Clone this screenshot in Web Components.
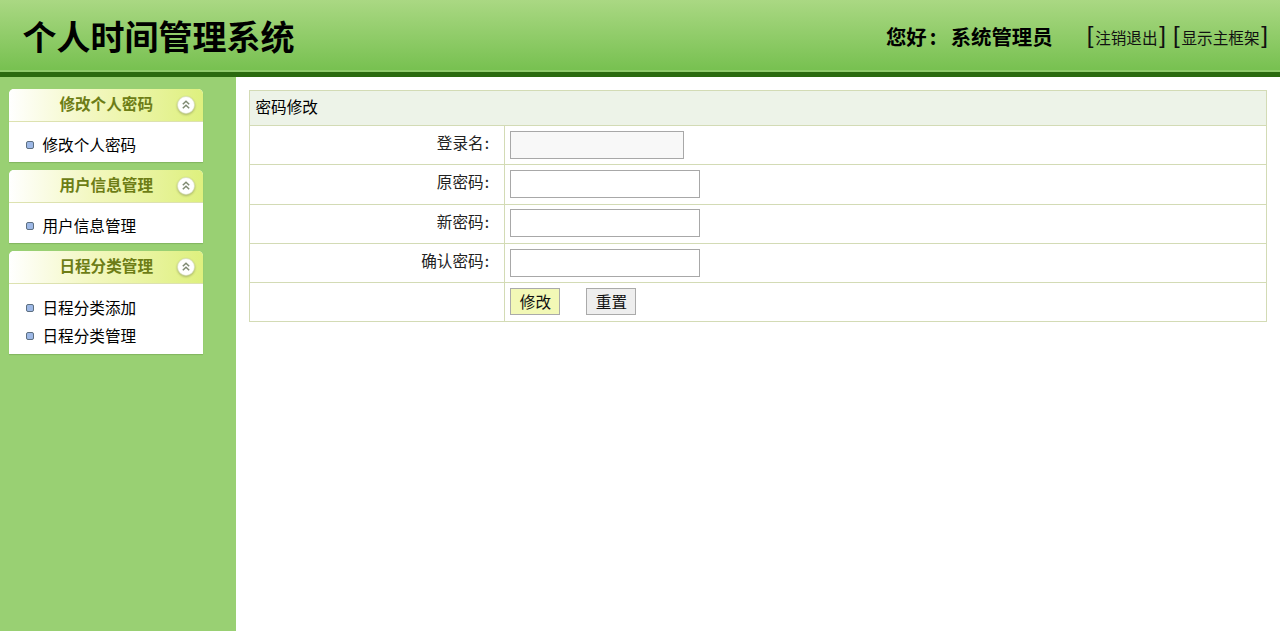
<!DOCTYPE html>
<html lang="zh"><head><meta charset="utf-8"><title>个人时间管理系统</title>
<style>
html,body{margin:0;height:100%;overflow:hidden;background:#fff}
body{font-family:"Noto Sans CJK SC","Liberation Sans",sans-serif;color:#000}
</style></head><body>
<app-shell>
  <app-header slot="header" title-text="个人时间管理系统" greeting="您好" name="系统管理员">
    <bracket-link>注销退出</bracket-link><bracket-link>显示主框架</bracket-link>
  </app-header>
  <side-panel slot="side" heading="修改个人密码"><side-item>修改个人密码</side-item></side-panel>
  <side-panel slot="side" heading="用户信息管理"><side-item>用户信息管理</side-item></side-panel>
  <side-panel slot="side" heading="日程分类管理" style="--pt:8.5px;--pb:5.5px"><side-item>日程分类添加</side-item><side-item>日程分类管理</side-item></side-panel>
  <form-table heading="密码修改">
    <form-row label="登录名"><text-field width="174" readonly></text-field></form-row>
    <form-row label="原密码"><text-field width="190"></text-field></form-row>
    <form-row label="新密码"><text-field width="190"></text-field></form-row>
    <form-row label="确认密码"><text-field width="190"></text-field></form-row>
    <form-row><action-button primary>修改</action-button><action-button>重置</action-button></form-row>
  </form-table>
</app-shell>
<script>
function def(name, html, extra){
  const t=document.createElement('template');t.innerHTML=html;
  customElements.define(name,class extends HTMLElement{
    connectedCallback(){
      if(this.shadowRoot)return;
      const r=this.attachShadow({mode:'open'});r.appendChild(t.content.cloneNode(true));
      if(extra)extra(this,r);
    }
  });
}
def('app-shell',`<style>
:host{display:grid;grid-template-columns:236px 1fr;grid-template-rows:77px 1fr;height:631px;width:1280px}
.h{grid-column:1/3}
aside{background:#99d073;padding:12px 33px 0 9px;display:flex;flex-direction:column;gap:8px}
main{padding:13px 13px 0 13px;background:#fff}
</style><div class="h"><slot name="header"></slot></div><aside><slot name="side"></slot></aside><main><slot></slot></main>`);
def('app-header',`<style>
:host{display:flex;align-items:center;height:77px;box-sizing:border-box;border-bottom:5px solid #2b6a10;
 background:linear-gradient(#aad883,#76c04f);padding:0 12px 0 23px;box-shadow:inset 0 -2px 0 #8fcb6b}
h1{margin:0;font-size:34px;font-weight:700;line-height:72px;flex:1;margin-left:-.5px}
b{font-size:20.4px;font-weight:700;margin-right:34px;display:flex}
em{font-style:normal;display:block;width:10px;margin:0 11px 0 3px;text-align:left}
</style><h1></h1><b><span class="g"></span><em>:</em><span class="n"></span></b><slot></slot>`,(e,r)=>{
  r.querySelector('h1').textContent=e.getAttribute('title-text');
  r.querySelector('.g').textContent=e.getAttribute('greeting');
  r.querySelector('.n').textContent=e.getAttribute('name');
});
def('bracket-link',`<style>
:host{display:inline-flex;align-items:center;font-size:15.6px;color:#111;height:30px;margin-left:7px;padding-top:1px}
:host(:first-of-type){margin-left:0}
i{font:normal 24px/30px "Liberation Sans",sans-serif;width:8.5px;margin-top:-3px}
i:last-child{text-align:right}
</style><i>[</i><slot></slot><i>]</i>`);
def('side-panel',`<style>
:host{display:block;width:194px;background:#fff;border-radius:5px 5px 0 0;box-shadow:0 1px 1px rgba(80,120,50,.3)}
header{position:relative;height:32px;border-bottom:1px solid #dde2b0;border-radius:5px 5px 0 0;
 background:linear-gradient(90deg,#fff,#f2f7bd 45%,#def07e);font-size:15.6px;font-weight:700;color:#6d7d16;line-height:29px;text-align:right}
span{padding-right:50px;white-space:nowrap}
svg{width:20px;height:20px;position:absolute;right:7px;top:6px;filter:drop-shadow(0 1px 1px rgba(90,100,60,.45))}
.b{padding:var(--pt,8px) 0 var(--pb,4px)}
</style><header><span></span><svg viewBox="0 0 20 20"><circle cx="10" cy="10" r="8.5" fill="#fff" stroke="#d6dcbc" stroke-width=".7"/><path d="M6.8 9.3 10 6.2l3.2 3.1M6.8 13.3 10 10.2l3.2 3.1" fill="none" stroke="#7f8a72" stroke-width="1.5"/></svg></header><div class="b"><slot></slot></div>`,(e,r)=>{
  r.querySelector('span').textContent=e.getAttribute('heading');
});
def('side-item',`<style>
:host{display:flex;align-items:center;height:28px;font-size:15.6px;padding-left:17px;gap:8.5px}
i{width:6px;height:6px;background:#9db8e6;border:1px solid #5d6f80;border-radius:2px;margin-top:2px}
</style><i></i><slot></slot>`);
def('form-table',`<style>
:host{display:block;width:1018px;border:1px solid #d3dbb5;border-bottom:0;font-size:15.6px;box-sizing:border-box}
header{height:34px;line-height:31px;background:#edf3e8;padding-left:5.5px;border-bottom:1px solid #d3dbb5}
</style><header></header><slot></slot>`,(e,r)=>{
  r.querySelector('header').textContent=e.getAttribute('heading');
});
def('form-row',`<style>
:host{display:grid;grid-template-columns:255px 1fr;height:38.25px;border-bottom:1px solid #d3dbb5}
.l{border-right:1px solid #d3dbb5;text-align:right;line-height:33.8px;padding-right:15px;color:#222}
.l span{margin-left:1px}
.v{display:flex;align-items:center;padding:0 0 .5px 5.4px;gap:26px}
</style><div class="l"></div><div class="v"><slot></slot></div>`,(e,r)=>{
  const a=e.getAttribute('label'),l=r.querySelector('.l');
  if(a){l.textContent=a;const s=document.createElement('span');s.textContent=':';l.appendChild(s);}
});
def('text-field',`<style>
:host{display:block}
input{display:block;box-sizing:border-box;height:28px;border:1px solid #a8a8a8;background:#fff;padding:0 4px;outline:0}
:host([readonly]) input{background:#f8f8f8}
</style><input>`,(e,r)=>{
  const i=r.querySelector('input');i.style.width=e.getAttribute('width')+'px';
  if(e.hasAttribute('readonly'))i.readOnly=true;
});
def('action-button',`<style>
:host{display:block;margin-top:-.4px}
button{display:block;width:50px;height:27px;box-sizing:border-box;border:1px solid #aaa;background:#eee;font:15.6px/25px "Noto Sans CJK SC",sans-serif;color:#111;padding:0}
:host([primary]) button{background:#f2f8b6}
</style><button><slot></slot></button>`);
</script></body></html>
